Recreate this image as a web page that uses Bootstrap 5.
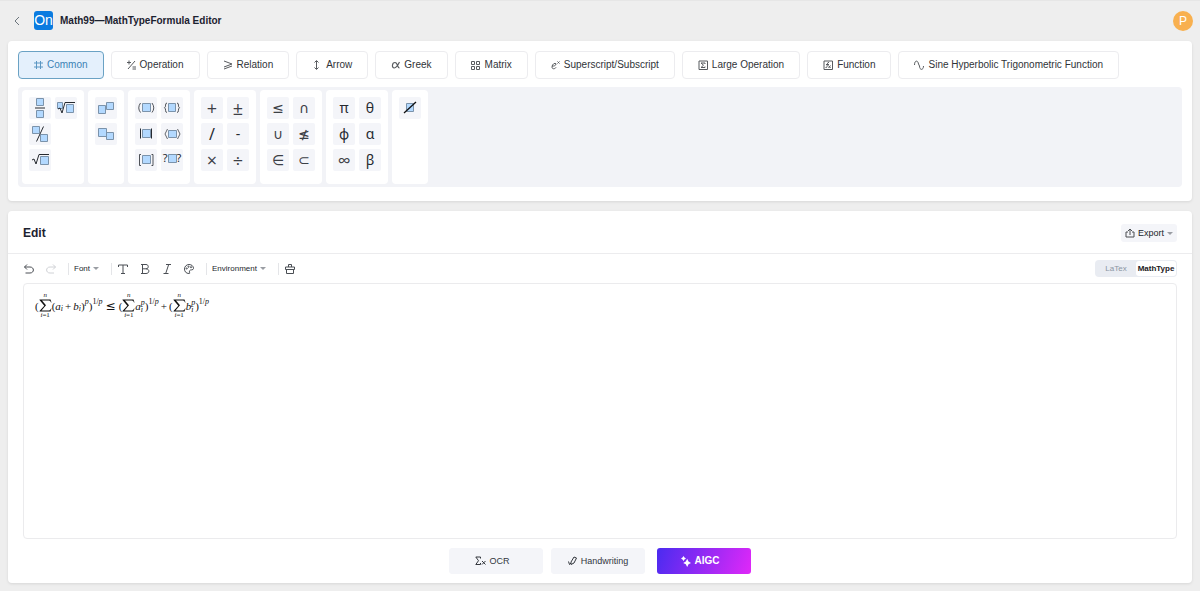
<!DOCTYPE html>
<html lang="en">
<head>
<meta charset="utf-8">
<meta name="viewport" content="width=device-width, initial-scale=1">
<title>Math99—MathTypeFormula Editor</title>
<link href="https://cdn.jsdelivr.net/npm/bootstrap@5.3.0/dist/css/bootstrap.min.css" rel="stylesheet">
<script src="https://cdn.jsdelivr.net/npm/bootstrap@5.3.0/dist/js/bootstrap.bundle.min.js"></script>
<style>
body{background:#eeeeee;color:#2b2f36;font-family:"Liberation Sans",Arial,sans-serif;font-size:10px;line-height:14px;min-height:100vh}
svg{fill:none;stroke:currentColor;stroke-width:1;flex:none;display:block}
button{color:inherit}
.topbar{height:41px;padding:0 7px 0 10px;border-top:1px solid #e6e6e6}
.logo-box{width:19px;height:19px;border-radius:3px;background:#0a7be0;color:#fff;font-size:14px;margin:0 7px 2px 10px}
.app-title{font-size:10px;line-height:14px;font-weight:700;margin:0;color:#1c2230}
.avatar{width:20px;height:20px;background:#f8b04f;color:#fff;font-size:12px}
.panel{background:#fff;border-radius:4px;margin:0 8px;box-shadow:0 1px 3px rgba(0,0,0,.1)}
.tools{padding:10px 10px 14px}
.tab-btn{--bs-btn-font-size:10px;--bs-btn-line-height:14px;--bs-btn-border-color:#ececef;--bs-btn-color:#2f3338;--bs-btn-border-radius:4px;--bs-btn-hover-border-color:#9cc3e0;padding:6px 15px;display:flex;align-items:center;gap:4px;white-space:nowrap}
.tab-btn svg{opacity:.8}
.tab-btn.active{--bs-btn-active-bg:#e4f0fc;--bs-btn-active-color:#3b82b5;--bs-btn-active-border-color:#6aa2c4}
.tab-list{gap:7px;margin-bottom:8px}
.palette{background:#f2f3f7;border-radius:4px;padding:3px 4px;gap:4px}
.sym-group{background:#fff;border-radius:4px;padding:7px 7px 13px;display:grid;grid-template-columns:repeat(2,22px);grid-template-rows:repeat(3,22px);gap:4px}
.sym-group.single{grid-template-columns:22px}
.sym{background:#f4f5f9;border:0;border-radius:2px;padding:0;display:flex;align-items:center;justify-content:center;font:14px/22px "Noto Sans","DejaVu Sans",sans-serif;color:#262a30}
.sym .bx{fill:#b3d9ff;stroke:#7b93ab}
.sym.rel-op{font-family:"DejaVu Sans",sans-serif;color:#3c4046}
.sym.arith{font-family:"Open Sans","DejaVu Sans",sans-serif;font-size:18px;color:#3c4046}
.sym.slash{font-size:16px}
.editor{margin-top:10px;margin-bottom:8px}
.editor-head{height:43px;padding:2px 15px 0;border-bottom:1px solid #ececee}
.editor-head h2{font-size:12px;line-height:16px;font-weight:700;margin:0;color:#1c2230}
.export-btn{--bs-btn-font-size:9px;--bs-btn-line-height:14px;--bs-btn-padding-x:3px;--bs-btn-padding-y:1px;--bs-btn-border-radius:3px;--bs-btn-bg:#f4f5f9;display:flex;align-items:center;gap:3px}
.export-btn svg{opacity:.8}
.caret{width:0;height:0;border:3px solid transparent;border-top-color:#9a9da3;border-bottom:0}
.toolbar{height:29px;padding:0 15px}
.tool{border:0;background:none;padding:0;font-size:8px;line-height:12px;color:#24282e;display:flex;align-items:center;justify-content:center;gap:3px}
.tool.ico{width:12px;margin-right:10px;color:#4a4e54}
.tool.off{color:#d0d2d6}
.sep{width:1px;height:12px;background:#e4e5e8;margin:0 5px 0 1px}
.toolbar .tool:not(.ico)+.sep{margin-left:12px}
.seg{background:#e9ecf2;border-radius:4px;padding:1px}
.seg-btn{border:0;background:none;border-radius:3px;font-size:8px;line-height:15px;padding:0;color:#8b95a3;width:40px}
.seg-btn.on{background:#fff;color:#1c2023;font-weight:700}
.canvas{border:1px solid #ebebed;border-radius:4px;margin:0 15px;height:256px;padding:8px 11px}
.formula{font:11px/14px "Liberation Serif","Times New Roman",serif;color:#111;display:flex;align-items:center}
.formula i{font-style:italic}
.formula .rel{margin:0 3px;font-size:12px;font-family:"DejaVu Sans",sans-serif}
.formula .plus{margin:0 2px}
.formula .sig{display:flex;flex-direction:column;align-items:center;width:13px;font-size:7px;line-height:7px}
.formula .pair{display:flex;flex-direction:column;font-size:8px;line-height:7px}
.formula .pow{font-size:8px;line-height:8px;padding-bottom:7px}
.formula .low{font-size:8px;line-height:8px;padding-top:6px}
.formula .big{fill:#111;stroke:none}
.actions{height:44px;gap:8px}
.act{--bs-btn-font-size:9px;--bs-btn-line-height:14px;--bs-btn-padding-x:0;--bs-btn-padding-y:5px;--bs-btn-bg:#f4f5f9;--bs-btn-color:#33373d;--bs-btn-border-color:#f4f5f9;--bs-btn-border-radius:3px;width:94px;display:flex;align-items:center;justify-content:center;gap:4px}
.act.ai{border:0;padding:6px 0;margin-left:4px;font-size:10px;font-weight:700;color:#fff;background:linear-gradient(110deg,#4a2bf0,#e028f8)}
.act.ai svg{fill:#fff;stroke:none}
</style>
</head>
<body>
<header class="topbar d-flex align-items-center">
  <a href="#" class="text-secondary" aria-label="Back"><svg width="14" height="12" viewBox="0 0 14 12"><path d="M9 2 5 6l4 4"/></svg></a>
  <span class="logo-box d-flex align-items-center justify-content-center">On</span>
  <h1 class="app-title">Math99—MathTypeFormula Editor</h1>
  <button class="avatar btn rounded-circle p-0 border-0 ms-auto d-flex align-items-center justify-content-center">P</button>
</header>
<main>
<section class="panel tools">
  <div class="tab-list d-flex flex-wrap">
    <button class="btn tab-btn active"><svg width="9" height="10" viewBox="0 0 9 10"><path d="M2.500 1v8M6.500 1v8M0 3h9M0 7h9"/></svg>Common</button>
    <button class="btn tab-btn"><svg width="9" height="10" viewBox="0 0 9 10" stroke-width=".8"><path d="M1 9 8 1M0 2.500h4M2 .5v4M5.500 7H9M5.500 9H9"/></svg>Operation</button>
    <button class="btn tab-btn"><svg width="10" height="10" viewBox="0 0 10 10" stroke-width=".8"><path d="m1 1 8 3-8 3M9 6 1 9"/></svg>Relation</button>
    <button class="btn tab-btn"><svg width="10" height="10" viewBox="0 0 10 10"><path d="M4.500 1v8M2.500 2.500l2-2 2 2M2.500 7.500l2 2 2-2"/></svg>Arrow</button>
    <button class="btn tab-btn"><svg width="9" height="10" viewBox="0 0 9 10"><path stroke-width="1.200" d="M8.500 2C7 5 5.500 8 3.300 8 .5 8 1 2.500 4 2.500c3 0 2 5.500 4.500 5.500"/></svg>Greek</button>
    <button class="btn tab-btn"><svg width="10" height="10" viewBox="0 0 10 10" stroke-width=".8"><path d="M.5 1.500h3v3h-3zM5.500 1.500h3v3h-3zM.5 6.500h3v3h-3zM5.500 6.500h3v3h-3z"/></svg>Matrix</button>
    <button class="btn tab-btn"><svg width="9" height="10" viewBox="0 0 9 10" stroke-width=".8"><path d="M1 6c2 .3 4-.5 4-2C5 2.500 1 3.500 1 7c0 2.500 3 2 4 .5M6.500 1.500l2 2M8.500 1.500l-2 2"/></svg>Superscript/Subscript</button>
    <button class="btn tab-btn"><svg width="10" height="10" viewBox="0 0 10 10" stroke-width=".8"><path d="M1 1h8.500v8.500H1zM7 4V3H3l2.500 2.200L3 7.500h4v-1"/></svg>Large Operation</button>
    <button class="btn tab-btn"><svg width="10" height="10" viewBox="0 0 10 10" stroke-width=".8"><path d="M1 1h8.500v8.500H1zM6 2.500c-1.500-.5-1.500 1-1.800 3S3.500 8 2.500 7.500M3 4.500h3M5.500 5.500l2 2.500M7.500 5.500l-2 2.500"/></svg>Function</button>
    <button class="btn tab-btn"><svg width="10" height="10" viewBox="0 0 10 10" stroke-width=".8"><path d="M.5 5C.5 0 4 0 4.500 4M5.500 6c0 4.500 4 4.500 4 0M4.500 4l1 2"/></svg>Sine Hyperbolic Trigonometric Function</button>
  </div>
  <div class="palette d-flex flex-wrap">
    <div class="sym-group">
      <button class="sym" aria-label="Fraction"><svg width="22" height="22"><path class="bx" d="M7.500 1.500h7v7h-7zM7.500 13.500h7v7h-7z"/><path d="M6 11h10"/></svg></button>
      <button class="sym" aria-label="Nth root"><svg width="22" height="22"><path class="bx" d="M2.500 5.500h5v6h-5zM11.500 7.500h7v8h-7z"/><path d="m3 12 2-1 2 5 3-10.500h10"/></svg></button>
      <button class="sym" aria-label="Slanted fraction"><svg width="22" height="22"><path class="bx" d="M3.500 3.500h7v7h-7zM11.500 11.500h7v7h-7z"/><path d="M14.500 3.500l-7 15"/></svg></button><span></span>
      <button class="sym" aria-label="Square root"><svg width="22" height="22"><path class="bx" d="M11.500 7.500h8v8h-8z"/><path d="m3 11 2-1 2 5 3-9.500h10"/></svg></button>
    </div>
    <div class="sym-group single">
      <button class="sym" aria-label="Superscript"><svg width="22" height="22"><path class="bx" d="M3.500 8.500h7v8h-7zM11.500 5.500h7v7h-7z"/></svg></button>
      <button class="sym" aria-label="Subscript"><svg width="22" height="22"><path class="bx" d="M3.500 5.500h8v8h-8zM11.500 9.500h7v7h-7z"/></svg></button>
    </div>
    <div class="sym-group">
      <button class="sym" aria-label="Parentheses"><svg width="22" height="22"><path class="bx" d="M7.500 6.500h8v8h-8z"/><path stroke-width=".8" d="M5.500 6q-3.500 5 0 9.500M17 6q3.500 5 0 9.500"/></svg></button>
      <button class="sym" aria-label="Braces"><svg width="22" height="22"><path class="bx" d="M7.500 6.500h7v8h-7z"/><path stroke-width=".8" d="M6 6c-2.500 0-.5 4-2.500 4.800C5.500 11.500 3.500 15.500 6 15.500M16 6c2.500 0 .5 4 2.500 4.800-2 .7 0 4.700-2.500 4.700"/></svg></button>
      <button class="sym" aria-label="Absolute value"><svg width="22" height="22"><path class="bx" d="M7.500 6.500h8v8h-8z"/><path d="M5.500 5.500v10M16.500 5.500v10"/></svg></button>
      <button class="sym" aria-label="Angle brackets"><svg width="22" height="22"><path class="bx" d="M7.500 7.500h8v7h-8z"/><path stroke-width=".7" d="M6.500 6 4 11l2.500 5M16.500 6 19 11l-2.500 5"/></svg></button>
      <button class="sym" aria-label="Brackets"><svg width="22" height="22"><path class="bx" d="M7.500 6.500h8v8h-8z"/><path stroke-width=".8" d="M6 5.500H4.500v11H6M16.500 5.500H18v11h-1.500"/></svg></button>
      <button class="sym pb-1" style="font-size:11px"><span>?</span><svg width="9" height="9"><path class="bx" d="M.5.5h8v8h-8z"/></svg><span>?</span></button>
    </div>
    <div class="sym-group">
      <button class="sym arith">+</button><button class="sym arith">±</button><button class="sym slash">/</button><button class="sym">-</button><button class="sym arith">×</button><button class="sym arith">÷</button>
    </div>
    <div class="sym-group">
      <button class="sym rel-op">≤</button><button class="sym rel-op">∩</button><button class="sym rel-op">∪</button><button class="sym rel-op">≰</button><button class="sym rel-op">∈</button><button class="sym rel-op">⊂</button>
    </div>
    <div class="sym-group">
      <button class="sym">π</button><button class="sym">θ</button><button class="sym">ϕ</button><button class="sym">α</button><button class="sym arith">∞</button><button class="sym">β</button>
    </div>
    <div class="sym-group single">
      <button class="sym" aria-label="Cancel"><svg width="22" height="22"><path class="bx" d="M7.500 6.500h7v8h-7z"/><path stroke="#111" stroke-width="1.300" d="m5 16 12-11"/></svg></button>
    </div>
  </div>
</section>
<section class="panel editor">
  <div class="editor-head d-flex align-items-center justify-content-between">
    <h2>Edit</h2>
    <button class="btn export-btn"><svg width="10" height="10" viewBox="0 0 10 10" stroke-width=".8"><path d="M3 4H1v5h8V4H7M5 7V1M3 3l2-2 2 2"/></svg>Export<span class="caret"></span></button>
  </div>
  <div class="toolbar d-flex align-items-center">
    <button class="tool ico" aria-label="Undo"><svg width="12" height="12" viewBox="0 0 12 12"><path d="M4 1.500 1.500 4 4 6.500M1.500 4H7c4.500 0 4.500 6 0 6H2.500"/></svg></button>
    <button class="tool ico off" aria-label="Redo"><svg width="12" height="12" viewBox="0 0 12 12"><path d="M8 1.500 10.500 4 8 6.500M10.500 4H5C.5 4 .5 10 5 10h4"/></svg></button>
    <span class="sep"></span>
    <button class="tool">Font<span class="caret"></span></button>
    <span class="sep"></span>
    <button class="tool ico" aria-label="Text"><svg width="12" height="12" viewBox="0 0 12 12" stroke-width=".9"><path d="M1.500 4V2h9v2M6 2v8.500M4 10.500h4"/></svg></button>
    <button class="tool ico" aria-label="Bold"><svg width="12" height="12" viewBox="0 0 12 12" stroke-width=".8"><path d="M2 1.500h5c3 0 3 4.300 0 4.300H4M7 5.800c3.800 0 3.800 4.700 0 4.700H2M3.500 1.500v9"/></svg></button>
    <button class="tool ico" aria-label="Italic"><svg width="12" height="12" viewBox="0 0 12 12" stroke-width=".8"><path d="M5 1.500h5M2.500 10.500h5M7.700 1.500l-3 9"/></svg></button>
    <button class="tool ico" aria-label="Colour"><svg width="12" height="12" viewBox="0 0 12 12" stroke-width=".8"><path d="M6 10.500C3 10.500 1.500 8.500 1.500 6 1.500 3.500 3.500 1.500 6 1.500S10.500 3 10.500 5.500c0 2-3.500.8-4 2.300S7.500 10.500 6 10.500z"/><circle cx="3.700" cy="5.500" r=".6"/><circle cx="5.500" cy="3.700" r=".6"/><circle cx="8" cy="4.200" r=".6"/></svg></button>
    <span class="sep"></span>
    <button class="tool">Environment<span class="caret"></span></button>
    <span class="sep"></span>
    <button class="tool ico" aria-label="Clear"><svg width="12" height="12" viewBox="0 0 12 12" stroke-width=".9"><path d="M4.500 4V1.500h3V4M1.500 4h9v2.500h-9zM2.500 6.500v4h7v-4"/></svg></button>
    <div class="seg d-flex ms-auto"><button class="seg-btn">LaTex</button><button class="seg-btn on">MathType</button></div>
  </div>
  <div class="canvas" contenteditable="true" role="textbox" aria-label="Formula">
    <div class="formula">
      <span>(</span><span class="sig"><i>n</i><svg class="big" width="13" height="13" viewBox="0 0 13 13"><path d="M.5.5h11l1 3H12c-.5-1.500-1.200-2-3-2H3L7 6.300 2.500 11.500H9c1.800 0 2.500-.5 3-2h.5l-1 3H.5V12l4.800-5.300L.5 1z"/></svg><span><i>i</i>=1</span></span><span>(<i>a</i></span><i class="low">i</i><span class="plus">+</span><i>b</i><i class="low">i</i><span>)</span><i class="pow">p</i><span>)</span><span class="pow">1/<i>p</i></span><span class="rel">≤</span>
      <span>(</span><span class="sig"><i>n</i><svg class="big" width="13" height="13" viewBox="0 0 13 13"><path d="M.5.5h11l1 3H12c-.5-1.500-1.200-2-3-2H3L7 6.300 2.500 11.500H9c1.800 0 2.500-.5 3-2h.5l-1 3H.5V12l4.800-5.300L.5 1z"/></svg><span><i>i</i>=1</span></span><i>a</i><span class="pair"><i>p</i><i>i</i></span><span>)</span><span class="pow">1/<i>p</i></span><span class="plus">+</span>
      <span>(</span><span class="sig"><i>n</i><svg class="big" width="13" height="13" viewBox="0 0 13 13"><path d="M.5.5h11l1 3H12c-.5-1.500-1.200-2-3-2H3L7 6.300 2.500 11.500H9c1.800 0 2.500-.5 3-2h.5l-1 3H.5V12l4.800-5.300L.5 1z"/></svg><span><i>i</i>=1</span></span><i>b</i><span class="pair"><i>p</i><i>i</i></span><span>)</span><span class="pow">1/<i>p</i></span>
    </div>
  </div>
  <div class="actions d-flex align-items-center justify-content-center">
    <button class="btn act pe-2"><svg width="11" height="10" viewBox="0 0 11 10" stroke-width=".8"><path d="M5.500 2.500V1H.8L3.500 4.700.8 8.500h4.700V7M7 5l3.500 3.500M10.500 5 7 8.500"/></svg>OCR</button>
    <button class="btn act"><svg width="9" height="10" viewBox="0 0 9 10" stroke-width=".8"><path d="M3 6 6 1l2.500 1L6 7 3 8.500zM.5 5.500l1 3L3 7"/></svg>Handwriting</button>
    <button class="btn act ai pe-2"><svg width="10" height="11" viewBox="0 0 10 11"><path d="m6.200 2.800 1.300 2.600L10 6.900 7.500 8.300 6.200 11 4.800 8.300 2.200 6.900l2.600-1.500zM2.500 0l1 1.500L5 2.500l-1.500 1L2.500 5l-1-1.500L0 2.500l1.500-1z"/></svg>AIGC</button>
  </div>
</section>
</main>
</body>
</html>
